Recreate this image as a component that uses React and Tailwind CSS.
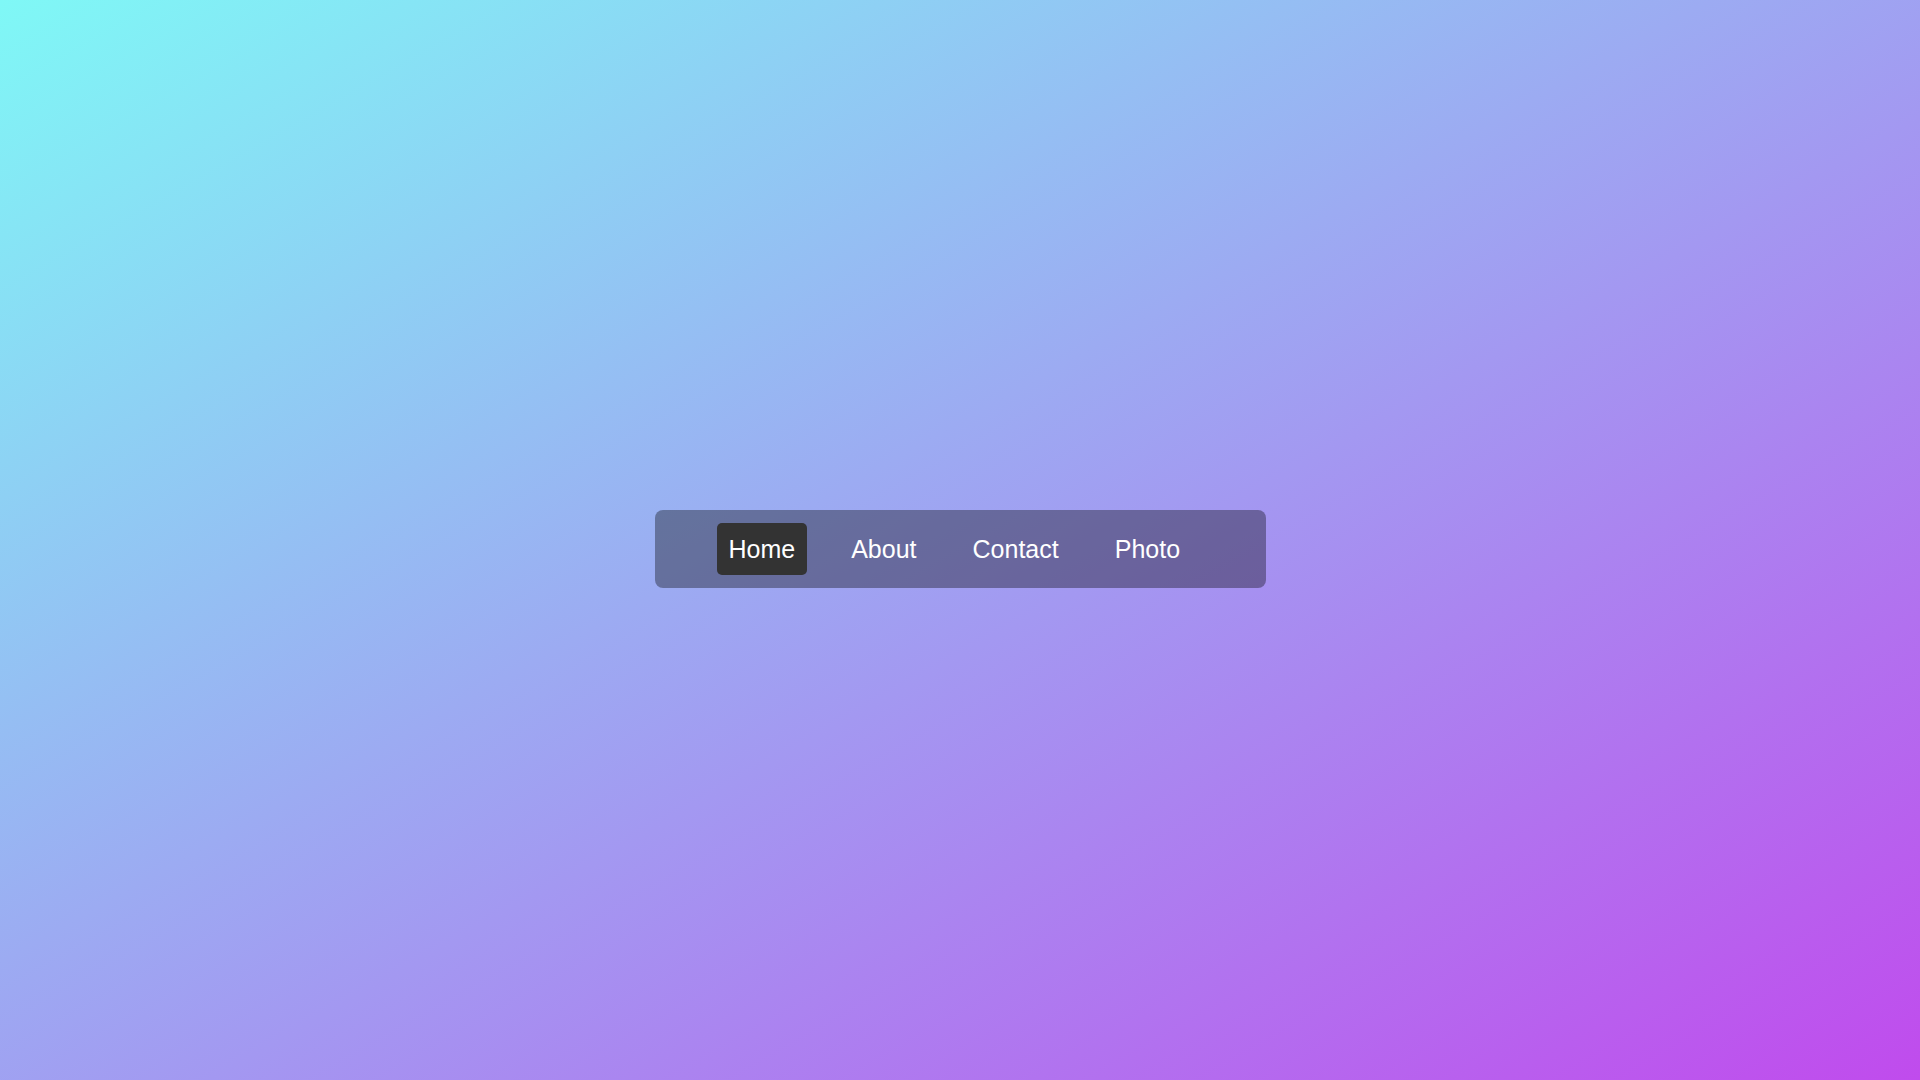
import React from "react";

const LINKS = ["Home", "About", "Contact", "Photo"];

export default function App() {
  return (
    <div
      className="min-h-screen w-full bg-[linear-gradient(to_bottom_right,#7ff8f6,#c04bed)] pt-[510px]"
      style={{ fontFamily: '"Liberation Sans", Arial, sans-serif' }}
    >
      <div className="flex justify-center">
        {/* nav bar */}
        <nav className="w-[611px] h-[78px] rounded-lg bg-black/35 flex items-center pl-[62px] gap-[32px]">
          {LINKS.map((l, i) => (
            <a
              key={l}
              href="#"
              className={`px-3 py-3 text-[25px] leading-[28px] text-white rounded-[5px] ${
                i === 0 ? "bg-[#333333]" : ""
              }`}
            >
              {l}
            </a>
          ))}
        </nav>
      </div>
    </div>
  );
}
